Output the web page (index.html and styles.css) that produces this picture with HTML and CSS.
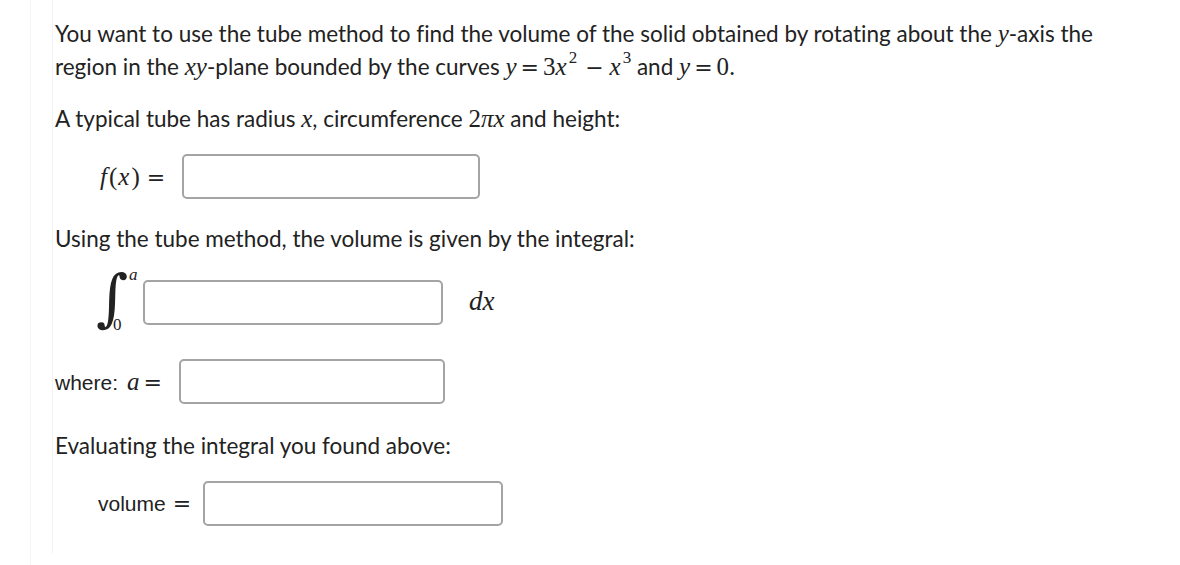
FILE: index.html
```html
<!DOCTYPE html>
<html>
<head>
<meta charset="utf-8">
<link rel="stylesheet" href="styles.css">
</head>
<body>
<div class="page">
  <div class="problem">
    <p class="para first">You want to use the tube method to find the volume of the solid obtained by rotating about the <span class="m">y</span>-axis the region in the <span class="m">xy</span>-plane bounded by the curves <span class="m">y</span><span class="op rel">=</span><span class="mr">3</span><span class="m">x</span><sup class="mr">2</sup><span class="op bin">−</span><span class="m">x</span><sup class="mr">3</sup> and <span class="m">y</span><span class="op rel">=</span><span class="mr">0.</span></p>
    <p class="para">A typical tube has radius <span class="m">x</span>, circumference <span class="mr">2</span><span class="m">πx</span> and height:</p>
    <div class="row row-f">
      <span class="lbl lbl-f"><span class="m">f</span><span class="mr">(</span><span class="m">x</span><span class="mr">)</span><span class="op rel">=</span></span>
      <span class="box box-f"></span>
    </div>
    <p class="para p-using">Using the tube method, the volume is given by the integral:</p>
    <div class="row row-int">
      <span class="integral">
        <span class="int-sign">∫</span>
        <span class="int-up m">a</span>
        <span class="int-lo mr">0</span>
      </span>
      <span class="box box-int"></span>
      <span class="dx m">dx</span>
    </div>
    <div class="row row-a">
      <span class="lbl lbl-a"><span class="sans">where:</span><span class="m var-a">a</span><span class="op rel">=</span></span>
      <span class="box box-a"></span>
    </div>
    <p class="para p-eval">Evaluating the integral you found above:</p>
    <div class="row row-vol">
      <span class="lbl lbl-vol"><span class="sans">volume</span><span class="op rel">=</span></span>
      <span class="box box-vol"></span>
    </div>
  </div>
</div>
</body>
</html>
```
FILE: styles.css
```css
html, body {
  margin: 0;
  padding: 0;
  background: #ffffff;
}
body {
  font-family: Lato, "DejaVu Sans", sans-serif;
  color: #222222;
  font-variant-ligatures: none;
}
.page {
  margin-left: 30px;
  border-left: 1px solid #f6f6f6;
  height: 565px;
  box-sizing: border-box;
  padding-left: 21px;
}
.problem {
  border-left: 1px solid #f2f2f2;
  padding-left: 2px;
  padding-top: 17px;
  width: 1070px;
  height: 536px;
}
.para {
  margin: 0;
  font-size: 22.5px;
  line-height: 33px;
}
.para + .para { margin-top: 18px; }
.m {
  font-family: "Liberation Serif", "DejaVu Serif", serif;
  font-style: italic;
  font-size: 25px;
}
.mr {
  font-family: "Liberation Serif", "DejaVu Serif", serif;
  font-size: 25px;
}
.op {
  font-family: "DejaVu Serif", "Liberation Serif", serif;
  font-size: 22px;
}
.rel { margin: 0 4px; }
.bin { margin: 0 6px 0 8px; }
sup.mr {
  font-size: 17px;
  vertical-align: 12px;
  line-height: 0;
  margin-left: 2px;
}
.sans {
  font-family: "Liberation Sans", Arial, sans-serif;
  font-size: 21px;
}
.row {
  display: flex;
  align-items: center;
}
.lbl {
  white-space: pre;
  box-sizing: border-box;
  display: flex;
  align-items: baseline;
}
.box {
  display: block;
  height: 45px;
  box-sizing: border-box;
  border: 2px solid #a4a4a4;
  border-radius: 5px;
  background: #fff;
}
.row-f {
  margin-top: 19px;
  padding-left: 44px;
}
.lbl-f { width: 83px; }
.lbl-f .mr { margin-left: 2px; }
.lbl-f .m { margin-left: 1px; }
.lbl-f .rel { margin-left: 7px; }
.box-f { width: 298px; }
.p-using { margin-top: 23px; }
.row-int {
  margin-top: 22px;
  padding-left: 41px;
}
.integral {
  position: relative;
  width: 47px;
  height: 56px;
  display: block;
}
.int-sign {
  position: absolute;
  left: 0;
  top: -10px;
  font-family: "DejaVu Serif", serif;
  font-size: 62px;
  line-height: 1;
  font-style: italic;
}
.int-up {
  position: absolute;
  left: 33px;
  top: -12px;
  font-size: 17px;
}
.int-lo {
  position: absolute;
  left: 17px;
  top: 38px;
  font-size: 17px;
}
.box-int { width: 300px; margin-top: -6px; }
.dx { margin-left: 26px; margin-top: -8px; font-size: 27px; }
.row-a { margin-top: 26px; }
.lbl-a { width: 124px; }
.var-a { margin-left: 9px; }
.box-a { width: 266px; }
.p-eval { margin-top: 25px; }
.row-vol {
  margin-top: 19px;
  padding-left: 43px;
}
.lbl-vol { width: 105px; }
.lbl-vol .rel { margin-left: 7px; }
.box-vol { width: 300px; }
```
